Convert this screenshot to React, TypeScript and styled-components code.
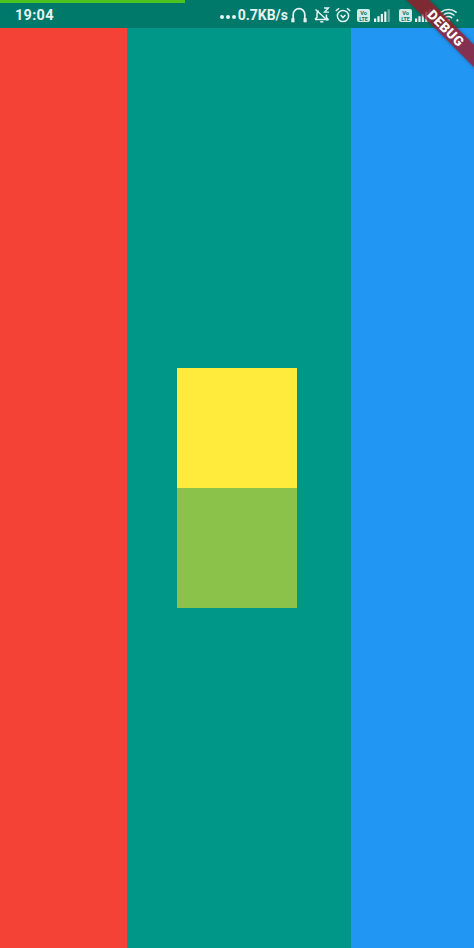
import React from 'react';
import styled, { createGlobalStyle } from 'styled-components';

const GlobalStyle = createGlobalStyle`
  html, body {
    margin: 0;
    padding: 0;
    background: #009688;
  }
`;

const Screen = styled.div`
  position: relative;
  width: 474px;
  height: 948px;
  overflow: hidden;
  display: flex;
  flex-direction: column;
  font-family: Roboto, 'Liberation Sans', sans-serif;
`;

const StatusBar = styled.header`
  position: relative;
  flex: 0 0 28px;
  display: flex;
  align-items: center;
  justify-content: space-between;
  padding: 2px 15px 0 15px;
  box-sizing: border-box;
  background: #00796b;
  color: #e6f3f1;
`;

const Progress = styled.div`
  position: absolute;
  top: 0;
  left: 0;
  width: 185px;
  height: 3px;
  background: #4cc31f;
`;

const Time = styled.span`
  font-size: 14.5px;
  font-weight: 700;
  letter-spacing: 0.3px;
`;

const Indicators = styled.div`
  display: flex;
  align-items: center;
`;

const Speed = styled.span`
  font-size: 14px;
  font-weight: 700;
`;

const Dots = styled.span`
  display: inline-flex;
  gap: 2px;
  margin-right: 2px;
  align-self: flex-end;
  padding-bottom: 4px;
`;

const Dot = styled.i`
  width: 4px;
  height: 4px;
  border-radius: 50%;
  background: #e6f3f1;
`;

const Columns = styled.main`
  flex: 1;
  display: flex;
`;

const SideColumn = styled.div<{ $color: string; $width: number }>`
  flex: 0 0 ${p => p.$width}px;
  background: ${p => p.$color};
`;

const CenterColumn = styled.div`
  flex: 1;
  padding-right: 4px;
  background: #009688;
  display: flex;
  flex-direction: column;
  align-items: center;
  justify-content: center;
`;

const Square = styled.div<{ $color: string }>`
  width: 120px;
  height: 120px;
  background: ${p => p.$color};
`;

const Ribbon = styled.div`
  position: absolute;
  top: 19.5px;
  left: 381px;
  width: 130px;
  height: 16px;
  transform: rotate(45deg);
  background: rgba(160, 20, 35, 0.78);
  box-shadow: 0 0 4px rgba(0, 0, 0, 0.3);
  color: #fff;
  font-size: 13.5px;
  font-weight: 900;
  line-height: 16px;
  text-align: center;
  letter-spacing: 0.4px;
`;

const Icon = styled.svg<{ $left: number }>`
  display: block;
  flex: none;
  margin-left: ${p => p.$left}px;
`;

const Headphones = () => (
  <Icon $left={3} width="16" height="16" viewBox="0 0 16 16" fill="none" stroke="#e6f3f1" strokeWidth="1.7">
    <path d="M2.2 12.5V7.5a5.8 5.8 0 0 1 11.6 0V12.5" />
    <path d="M.6 11.5h2.6v3.6H.6zM12.8 11.5h2.6v3.6h-2.6z" fill="#e6f3f1" strokeWidth="0.5" />
  </Icon>
);

const BellOff = () => (
  <Icon $left={7} width="16" height="16" viewBox="0 0 16 16" fill="none" stroke="#e6f3f1" strokeWidth="1.5">
    <path d="M1 12.5h13l-1.6-2.2V7.5M4.6 3.6A4.4 4.4 0 0 0 3 7v3.3L1 12.5" />
    <path d="M6.2 14.8h3.2" />
    <path d="M1.5 2.5l12 11" />
    <path d="M10 1h4.5l-4 4.2h4.5" strokeWidth="1.3" />
  </Icon>
);

const Alarm = () => (
  <Icon $left={5} width="16" height="16" viewBox="0 0 16 16" fill="none" stroke="#e6f3f1" strokeWidth="1.5">
    <circle cx="8" cy="9" r="5.6" />
    <path d="M5.6 8l2.4 2.6L10.4 8" />
    <path d="M.8 4L4 1.2M15.2 4L12 1.2" />
  </Icon>
);

const VoLte = ({ left }: { left: number }) => (
  <Icon $left={left} width="13" height="13" viewBox="0 0 13 13">
    <rect width="13" height="13" rx="2" fill="#d5e9e6" />
    <text x="6.5" y="5.8" fontSize="5.6" fontWeight="700" textAnchor="middle" fill="#00796b" fontFamily="Roboto, sans-serif">Vo</text>
    <text x="6.5" y="11.6" fontSize="5.2" fontWeight="700" textAnchor="middle" fill="#00796b" fontFamily="Roboto, sans-serif">LTE</text>
  </Icon>
);

const Signal = ({ left, strong }: { left: number; strong: number }) => (
  <Icon $left={left} width="16" height="13" viewBox="0 0 16 13" fill="#e6f3f1">
    {[0, 1, 2, 3, 4].map(i => (
      <rect key={i} x={i * 3.4} y={9.5 - i * 2.3} width="2.2" height={3.5 + i * 2.3} opacity={i < strong ? 1 : 0.45} />
    ))}
  </Icon>
);

const Wifi = () => (
  <Icon $left={9} width="19" height="16" viewBox="0 0 19 16" fill="none" stroke="#e6f3f1" strokeWidth="1.6" strokeLinecap="round">
    <path d="M1 5.2a12 12 0 0 1 15 0M3.2 8a8.4 8.4 0 0 1 10.6 0M5.4 10.7a5 5 0 0 1 6.2 0" />
    <circle cx="8.5" cy="13.4" r="1.3" fill="#e6f3f1" stroke="none" />
    <circle cx="17.4" cy="13.4" r="1.1" fill="#e6f3f1" stroke="none" />
  </Icon>
);

export default function App() {
  return (
    <Screen>
      <GlobalStyle />
      <StatusBar>
        <Progress />
        <Time>19:04</Time>
        <Indicators>
          <Dots>
            <Dot />
            <Dot />
            <Dot />
          </Dots>
          <Speed>0.7KB/s</Speed>
          <Headphones />
          <BellOff />
          <Alarm />
          <VoLte left={6} />
          <Signal left={4} strong={4} />
          <VoLte left={9} />
          <Signal left={3} strong={4} />
          <Wifi />
        </Indicators>
      </StatusBar>
      <Columns>
        <SideColumn $color="#f44336" $width={127} />
        <CenterColumn>
          <Square $color="#ffeb3b" />
          <Square $color="#8bc34a" />
        </CenterColumn>
        <SideColumn $color="#2196f3" $width={123} />
      </Columns>
      <Ribbon>DEBUG</Ribbon>
    </Screen>
  );
}
